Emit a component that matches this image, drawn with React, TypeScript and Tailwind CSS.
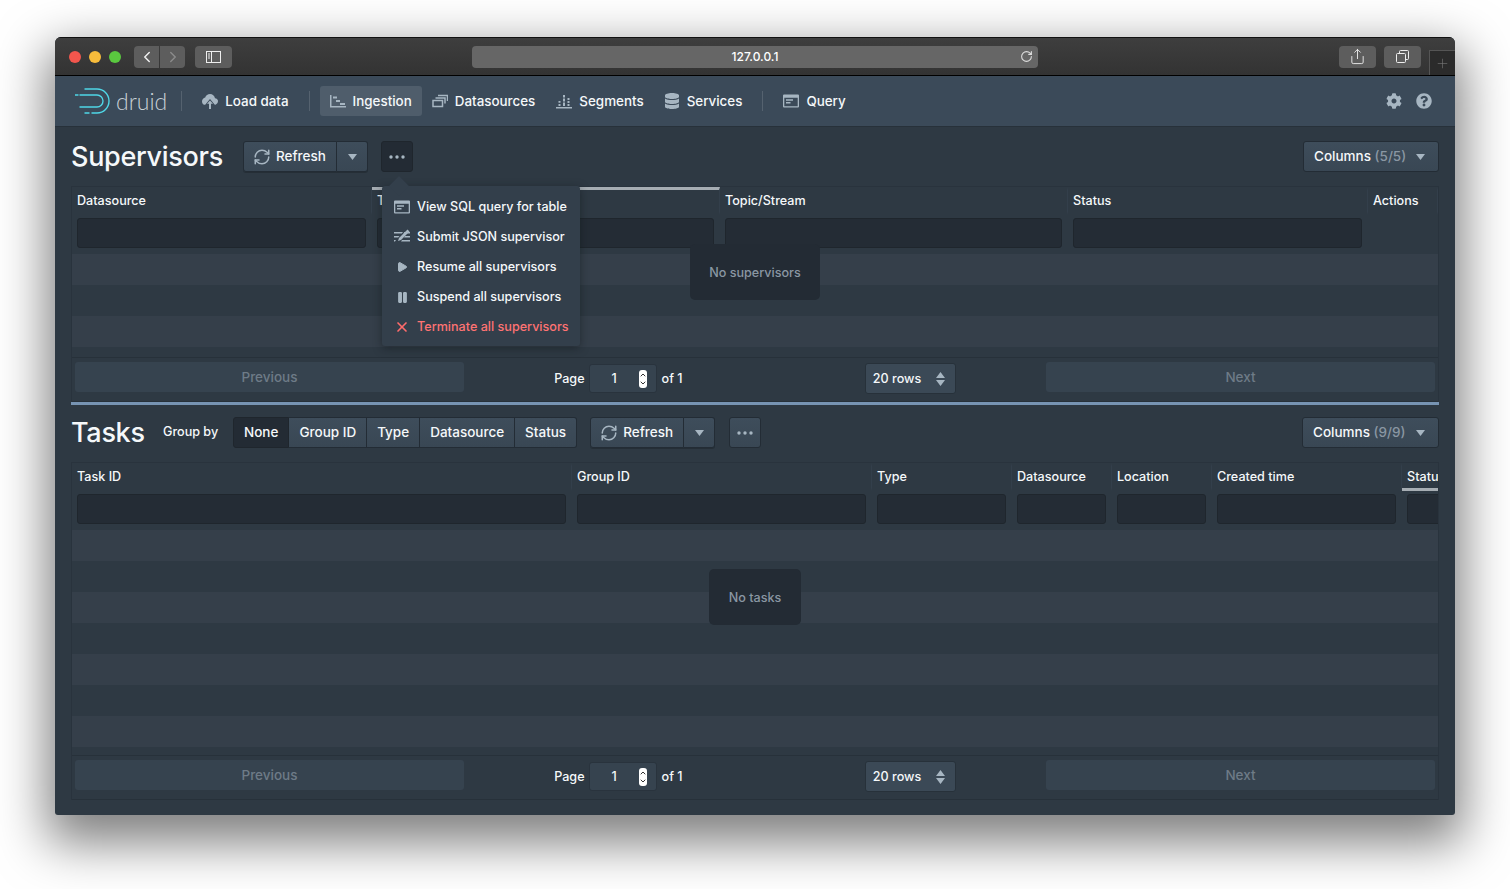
import React from "react";
import { ChevronLeft, ChevronRight, RotateCw, Share, Plus, RefreshCw, Play, Pause, X, ChevronUp, ChevronDown } from "lucide-react";
import { FaCog, FaQuestionCircle, FaDatabase } from "react-icons/fa";

const font = "font-['Inter','Liberation_Sans',sans-serif]";

function DruidLogo() {
  return (
    <svg width="36" height="27" viewBox="0 0 36 27" fill="none" stroke="#4fd6e6" strokeWidth="1.4" strokeLinecap="round">
      <path d="M10 1H22A12 12 0 0 1 22 25H17" />
      <path d="M5 7H22A6 6 0 0 1 22 19H5" />
      <path d="M0 7H3M10 25H14" />
    </svg>
  );
}

function CloudUpload() {
  return (
    <svg width="16" height="16" viewBox="0 0 16 16" fill="#a7b6c2">
      <path d="M8 7.5l3 3.2H9V16H7v-5.3H5L8 7.5z" />
      <path d="M13 5.3C12.6 2.9 10.5 1 8 1 5.8 1 3.9 2.5 3.2 4.5 1.4 4.9 0 6.5 0 8.4 0 9.8.8 11 2 11.7h1.2L8 6l4.8 5.7h.7C15 11 16 9.6 16 8c0-1.4-1.2-2.5-3-2.7z" />
    </svg>
  );
}

function GanttIcon() {
  return (
    <svg width="16" height="16" viewBox="0 0 16 16" fill="#a7b6c2">
      <path d="M0 2h1.5v11H16v1.5H0V2z" />
      <path d="M3 3.5h4v2H3zM6 7h4v2H6zM10 10h5v2h-5z" />
    </svg>
  );
}

function MultiSelectIcon() {
  return (
    <svg width="16" height="16" viewBox="0 0 16 16" fill="none" stroke="#a7b6c2" strokeWidth="1.5">
      <path d="M1 7.5h9.5v6H1z" />
      <path d="M3.5 5h9.5v5.5" />
      <path d="M6 2.5h9.5V8" />
    </svg>
  );
}

function StackedChartIcon() {
  return (
    <svg width="16" height="16" viewBox="0 0 16 16" fill="#a7b6c2">
      <path d="M0 14h16v1.5H0z" />
      <path d="M2.5 8h2v1.8h-2zM2.5 11h2v2h-2zM7 2h2v2.5H7zM7 5.5h2v3H7zM7 9.5h2V13H7zM11.5 5h2v2h-2zM11.5 8h2v2h-2zM11.5 11h2v2h-2z" />
    </svg>
  );
}

function ApplicationIcon() {
  return (
    <svg width="16" height="16" viewBox="0 0 16 16" fill="#a7b6c2">
      <path fillRule="evenodd" d="M1 1.5h14a1 1 0 011 1v11a1 1 0 01-1 1H1a1 1 0 01-1-1v-11a1 1 0 011-1zm.3 3.2v8.5h13.4V4.7H1.3z" />
      <path d="M3 6.3h7v1.4H3zM3 9h4.5v1.4H3z" />
    </svg>
  );
}

function EditIcon() {
  return (
    <svg width="16" height="16" viewBox="0 0 16 16" fill="#a7b6c2">
      <path d="M0 3h9L7.8 4.5H0zM0 7h5.5L4.2 8.5H0zM0 11h2L1 12.5H0zM10.5 3H16v1.5h-6.8zM11 7h5v1.5h-6zM8 11h8v1.5H7z" />
      <path d="M13.5.5l2 2-8.5 8.5-3 1 1-3z" />
    </svg>
  );
}

function CaretDown({ color = "#a7b6c2" }: { color?: string }) {
  return (
    <svg width="9" height="6" viewBox="0 0 9 6" fill={color}>
      <path d="M0 0h9L4.5 6z" />
    </svg>
  );
}

function Dots({ color = "#a7b6c2" }: { color?: string }) {
  return (
    <svg width="16" height="4" viewBox="0 0 16 4" fill={color}>
      <circle cx="2" cy="2" r="1.7" />
      <circle cx="8" cy="2" r="1.7" />
      <circle cx="14" cy="2" r="1.7" />
    </svg>
  );
}

const btn = "flex items-center h-[31px] bg-gradient-to-b from-[#3e4d5b] to-[#394754] text-[13.5px] font-medium text-[#f5f8fa] border border-[#232c35]";

function RefreshGroup() {
  return (
    <div className="flex rounded-[3px] shadow-[0_1px_0_rgba(16,22,26,0.3)]">
      <div className={`${btn} w-[94px] pl-[9px] gap-[5px] rounded-l-[3px]`}>
        <RefreshCw size={18} color="#a7b6c2" strokeWidth={2} />
        <span>Refresh</span>
      </div>
      <div className={`${btn} w-[31px] justify-center rounded-r-[3px] border-l-0`}>
        <CaretDown />
      </div>
    </div>
  );
}

function ColumnsButton({ count, width }: { count: string; width: string }) {
  return (
    <div className={`${btn} ${width} justify-between pl-[10px] pr-[13px] rounded-[3px]`}>
      <span>
        Columns <span className="text-[#8a97a3]">{count}</span>
      </span>
      <CaretDown />
    </div>
  );
}

type Col = { label: string; width: string; sortTop?: boolean; sortBottom?: boolean; hideInput?: boolean };

function HeaderCell({ col }: { col: Col }) {
  return (
    <div
      className={`${col.width} shrink-0 h-[28px] flex items-center pl-[5px] whitespace-nowrap text-[12.6px] font-medium text-[#f5f8fa] border-r border-[#333f4b] border-t-[3px] border-b-[3px] ${col.sortTop ? "border-t-[#a6adb3]" : "border-t-transparent"} ${col.sortBottom ? "border-b-[#a6adb3]" : "border-b-transparent"}`}
    >
      {col.label}
    </div>
  );
}

function FilterCell({ col }: { col: Col }) {
  return (
    <div className={`${col.width} shrink-0 h-[39px] pt-[3px] pl-[5px] pr-[6px]`}>
      {!col.hideInput && <div className="h-[30px] bg-[#242c35] rounded-[3px] border border-[#1f262d]" />}
    </div>
  );
}

function Pagination() {
  return (
    <div className="flex h-[45px] items-start pt-[4px] px-[3px] border-t border-b border-[#27313a]">
      <div className="w-[389px] h-[30px] flex items-center justify-center rounded-[3px] bg-[#36434f] text-[13.5px] font-medium text-[#6e7b87]">Previous</div>
      <div className="flex-1 flex items-center justify-around text-[12.6px] font-medium text-[#f5f8fa] mt-[1px]">
        <div className="flex items-center">
          <span className="mr-[4px] mt-[1px]">Page</span>
          <div className="w-[68px] h-[29px] flex items-center rounded-[3px] bg-[#36434f] border border-[#29333d]">
            <span className="w-[49px] text-center mt-[1px]">1</span>
            <div className="w-[8px] h-[18px] rounded-[3px] bg-white flex flex-col items-center justify-center">
              <ChevronUp size={8} color="#333" strokeWidth={3} />
              <ChevronDown size={8} color="#333" strokeWidth={3} />
            </div>
          </div>
          <span className="ml-[5px] mt-[1px]">of 1</span>
        </div>
        <div className="ml-[2px] w-[91px] h-[31px] flex items-center justify-between pl-[7px] pr-[10px] rounded-[3px] bg-[#3b4956] border border-[#27313a]">
          <span className="mt-[1px]">20 rows</span>
          <svg width="9" height="14" viewBox="0 0 9 14" fill="#a7b6c2">
            <path d="M4.5 0L9 6H0zM0 8h9l-4.5 6z" />
          </svg>
        </div>
      </div>
      <div className="w-[389px] h-[30px] flex items-center justify-center rounded-[3px] bg-[#36434f] text-[13.5px] font-medium text-[#6e7b87]">Next</div>
    </div>
  );
}

function Table({ cols, rows, message, boxClass, foot }: { cols: Col[]; rows: number; message: string; boxClass: string; foot: string }) {
  return (
    <div className="relative w-[1368px] overflow-hidden border-t border-l border-r border-[#29333d]">
      <div className="flex">
        {cols.map((c) => (
          <HeaderCell key={c.label} col={c} />
        ))}
      </div>
      <div className="flex">
        {cols.map((c) => (
          <FilterCell key={c.label} col={c} />
        ))}
      </div>
      {Array.from({ length: rows }).map((_, i) => (
        <div key={i} className={`h-[31px] ${i % 2 === 0 ? "bg-[#353f4a]" : ""}`} />
      ))}
      <div className={foot} />
      <Pagination />
      <div className={`absolute ${boxClass} h-[56px] pt-[2px] flex items-center justify-center rounded-[5px] bg-[#232b34] text-[12.6px] font-medium text-[#8a97a3]`}>
        {message}
      </div>
    </div>
  );
}

const supervisorCols: Col[] = [
  { label: "Datasource", width: "w-[300px]" },
  { label: "Type", width: "w-[348px]", sortTop: true },
  { label: "Topic/Stream", width: "w-[348px]" },
  { label: "Status", width: "w-[300px]" },
  { label: "Actions", width: "w-[70px]", hideInput: true },
];

const taskCols: Col[] = [
  { label: "Task ID", width: "w-[500px]" },
  { label: "Group ID", width: "w-[300px]" },
  { label: "Type", width: "w-[140px]" },
  { label: "Datasource", width: "w-[100px]" },
  { label: "Location", width: "w-[100px]" },
  { label: "Created time", width: "w-[190px]" },
  { label: "Status", width: "w-[100px]", sortBottom: true },
];

const navItems = [
  { label: "Ingestion", icon: <GanttIcon />, active: true, cls: "" },
  { label: "Datasources", icon: <MultiSelectIcon />, cls: "" },
  { label: "Segments", icon: <StackedChartIcon />, cls: "ml-[1px]" },
  { label: "Services", icon: <FaDatabase size={16} color="#a7b6c2" />, cls: "" },
];

const menuItems = [
  { label: "View SQL query for table", icon: <ApplicationIcon /> },
  { label: "Submit JSON supervisor", icon: <EditIcon /> },
  { label: "Resume all supervisors", icon: <Play size={12} fill="#a7b6c2" color="#a7b6c2" /> },
  { label: "Suspend all supervisors", icon: <Pause size={13} fill="#a7b6c2" color="#a7b6c2" /> },
  { label: "Terminate all supervisors", icon: <X size={16} color="#ff6b6b" strokeWidth={2.5} />, danger: true },
];

const chromeBtn = "h-[22px] flex items-center justify-center rounded-[4px] bg-[#5d5d5d]";

export default function App() {
  return (
    <div className={`w-[1510px] h-[889px] overflow-hidden bg-white pl-[55px] pt-[37px] ${font}`}>
      <div className="w-[1400px] h-[778px] flex flex-col rounded-t-[6px] rounded-b-[3px] overflow-hidden shadow-[0_20px_50px_8px_rgba(0,0,0,0.5)] bg-[#2e3943]">
        {/* browser chrome */}
        <div className="h-[39px] shrink-0 relative flex items-center pl-[14px] bg-gradient-to-b from-[#3e3e3e] to-[#333] border-t border-[#111] border-b border-b-black">
          <div className="flex gap-[8px]">
            <div className="w-[12px] h-[12px] rounded-full bg-[#f2564d]" />
            <div className="w-[12px] h-[12px] rounded-full bg-[#f8bc3b]" />
            <div className="w-[12px] h-[12px] rounded-full bg-[#5ac83f]" />
          </div>
          <div className={`${chromeBtn} w-[25px] ml-[13px] rounded-r-none`}>
            <ChevronLeft size={18} color="#eee" />
          </div>
          <div className={`${chromeBtn} w-[25px] ml-[1px] rounded-l-none`}>
            <ChevronRight size={18} color="#8a8a8a" />
          </div>
          <div className={`${chromeBtn} w-[37px] ml-[10px]`}>
            <svg width="15" height="12" viewBox="0 0 15 12" fill="none" stroke="#eee">
              <rect x="0.5" y="0.5" width="14" height="11" />
              <path d="M5.5 0.5v11M2 3h2M2 5h2M2 7h2" />
            </svg>
          </div>
          <div className={`${chromeBtn} w-[566px] ml-[240px] relative bg-[#666]`}>
            <span className="text-[12px] font-medium text-white mt-[1px]">127.0.0.1</span>
            <RotateCw size={13} color="#ddd" className="absolute right-[5px]" />
          </div>
          <div className={`${chromeBtn} w-[37px] ml-[301px]`}>
            <Share size={17} color="#eee" strokeWidth={1.3} />
          </div>
          <div className={`${chromeBtn} w-[37px] ml-[8px]`}>
            <svg width="13" height="13" viewBox="0 0 13 13" fill="none" stroke="#eee">
              <rect x="0.5" y="3.5" width="9" height="9" rx="1" />
              <path d="M3.5 3.5v-2a1 1 0 011-1h7a1 1 0 011 1v7a1 1 0 01-1 1h-2" />
            </svg>
          </div>
          <div className="w-[26px] h-[25px] ml-[8px] self-end flex items-center justify-center border-l border-t border-[#555] bg-[#2b2b2b]">
            <Plus size={15} color="#777" strokeWidth={1} />
          </div>
        </div>

        {/* nav */}
        <div className="h-[51px] shrink-0 flex items-center bg-[#3b4a59] border-b border-[#27313a] pl-[20px] pr-[23px]">
          <DruidLogo />
          <span className="ml-[5px] text-[23px] font-light text-[#c8d0d6] font-['Lato',sans-serif]">druid</span>
          <div className="w-px h-[20px] bg-[#55626f] ml-[14px]" />
          <div className="flex items-center h-[30px] ml-[20px] gap-[7px] text-[13.4px] font-medium text-[#f5f8fa]">
            <CloudUpload />
            <span>Load data</span>
          </div>
          <div className="w-px h-[20px] bg-[#55626f] ml-[20px]" />
          <div className="flex items-center ml-[10px]">
            {navItems.map((n) => (
              <div
                key={n.label}
                className={`flex items-center h-[30px] px-[10px] gap-[7px] rounded-[3px] text-[13.4px] font-medium text-[#f5f8fa] ${n.cls} ${n.active ? "bg-[#4f5d6b]" : ""}`}
              >
                {n.icon}
                <span>{n.label}</span>
              </div>
            ))}
          </div>
          <div className="w-px h-[20px] bg-[#55626f] ml-[10px]" />
          <div className="flex items-center h-[30px] ml-[20px] gap-[7px] text-[13.4px] font-medium text-[#f5f8fa]">
            <ApplicationIcon />
            <span>Query</span>
          </div>
          <div className="ml-auto flex items-center gap-[14px]">
            <FaCog size={16} color="#a7b6c2" />
            <FaQuestionCircle size={16} color="#a7b6c2" />
          </div>
        </div>

        {/* supervisors */}
        <div className="relative h-[275px] shrink-0 px-[16px] pt-[14px]">
          <div className="flex items-center h-[31px]">
            <h1 className="w-[172px] shrink-0 mt-[1px] text-[27px] font-medium text-[#f5f8fa] tracking-[-0.3px]">Supervisors</h1>
            <RefreshGroup />
            <div className="ml-[13px] w-[32px] h-[31px] flex items-center justify-center rounded-[3px] bg-[#232b34] border border-[#1f262d]">
              <Dots />
            </div>
            <div className="ml-auto">
              <ColumnsButton count="(5/5)" width="w-[136px]" />
            </div>
          </div>
          <div className="mt-[14px]">
            <Table cols={supervisorCols} rows={3} message="No supervisors" boxClass="left-[618px] top-[57px] w-[130px]" foot="h-[10px]" />
          </div>

          {/* popover menu */}
          <div className="absolute left-[327px] top-[59px] w-[198px] pt-[6px] pb-[4px] rounded-[3px] bg-[#333f4b] shadow-[0_2px_8px_rgba(16,22,26,0.5)] text-[12.6px] font-medium">
            <div className="absolute -top-[7px] left-[10px] w-[14px] h-[14px] rotate-45 bg-[#333f4b]" />
            {menuItems.map((m) => (
              <div key={m.label} className={`relative h-[30px] flex items-center ${m.danger ? "text-[#ff7373]" : "text-[#f5f8fa]"}`}>
                <div className="w-[35px] flex justify-center pl-[5px]">{m.icon}</div>
                <span className="whitespace-nowrap">{m.label}</span>
              </div>
            ))}
          </div>
        </div>

        <div className="h-[3px] shrink-0 mx-[16px] bg-[#7794b3]" />

        {/* tasks */}
        <div className="flex-1 px-[16px] pt-[12px]">
          <div className="flex items-center h-[31px]">
            <h1 className="w-[92px] shrink-0 mt-[1px] text-[27px] font-medium text-[#f5f8fa] tracking-[-0.3px]">Tasks</h1>
            <span className="w-[70px] shrink-0 text-[12.6px] font-medium text-[#f5f8fa]">Group by</span>
            <div className="flex rounded-[3px] text-[13.5px] font-medium text-[#f5f8fa]">
              <div className="h-[31px] px-[10px] flex items-center rounded-l-[3px] bg-[#232b34] border border-[#1f262d]">None</div>
              {["Group ID", "Type", "Datasource", "Status"].map((g) => (
                <div key={g} className={`${btn} px-[10px] border-l-0 last:rounded-r-[3px]`}>
                  {g}
                </div>
              ))}
            </div>
            <div className="ml-[13px]">
              <RefreshGroup />
            </div>
            <div className="ml-[14px] w-[32px] h-[31px] flex items-center justify-center rounded-[3px] bg-gradient-to-b from-[#3e4d5b] to-[#394754] border border-[#232c35]">
              <Dots />
            </div>
            <div className="ml-auto">
              <ColumnsButton count="(9/9)" width="w-[137px]" />
            </div>
          </div>
          <div className="mt-[14px]">
            <Table cols={taskCols} rows={7} message="No tasks" boxClass="left-[637px] top-[106px] w-[92px]" foot="h-[8px]" />
          </div>
        </div>
      </div>
    </div>
  );
}
